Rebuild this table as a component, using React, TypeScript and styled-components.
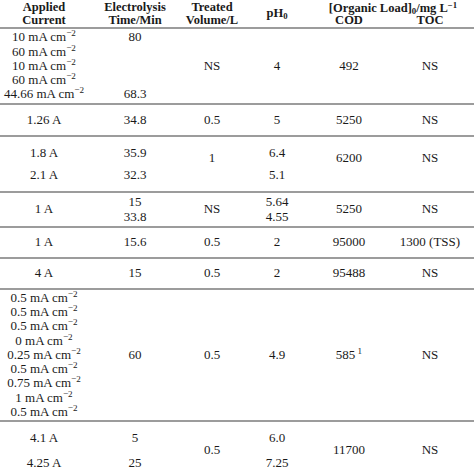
import type { ReactNode } from "react";
import styled, { createGlobalStyle } from "styled-components";

const GlobalStyle = createGlobalStyle`
  html, body {
    margin: 0;
    padding: 0;
    background: #ffffff;
  }
  body {
    font-family: "Liberation Serif", "Times New Roman", serif;
    color: #1a1a1a;
  }
`;

const Table = styled.table`
  width: 474px;
  border-collapse: collapse;
  table-layout: fixed;
  font-size: 13px;
`;

const HeadRow = styled.tr`
  height: 14px;
`;

const HeadCell = styled.th`
  padding: 0;
  font-size: 12.5px;
  font-weight: bold;
  line-height: 12.5px;
  text-align: center;
  vertical-align: middle;
  border-bottom: 2px solid #9c9c9c;
`;

const GroupCell = styled.th`
  padding: 0;
  font-size: 12.5px;
  font-weight: bold;
  line-height: 12.5px;
  text-align: center;
  vertical-align: bottom;
  white-space: nowrap;
`;

const SubHeadCell = styled(HeadCell)`
  vertical-align: top;
`;

const BodyRow = styled.tr<{ $height: number; $last?: boolean }>`
  height: ${(p) => p.$height}px;

  td {
    border-bottom: ${(p) => (p.$last ? "none" : "2px solid #9c9c9c")};
  }
`;

const Cell = styled.td<{ $lift?: number }>`
  padding: 0 0 ${(p) => p.$lift ?? 0}px;
  text-align: center;
  vertical-align: middle;
  line-height: 14.3px;
  white-space: nowrap;
`;

const Lines = styled.div<{ $gap?: number }>`
  display: flex;
  flex-direction: column;
  align-items: center;
  gap: ${(p) => p.$gap ?? 0}px;
`;

const Line = styled.span`
  display: block;
`;

const Sup = styled.sup`
  font-size: 0.7em;
  line-height: 0;
  vertical-align: 0.5em;
`;

const Sub = styled.sub`
  font-size: 0.7em;
  line-height: 0;
  vertical-align: -0.25em;
`;

type Row = {
  height: number;
  current: string[];
  currentGap?: number;
  time: string[];
  timeGap?: number;
  volume: string;
  ph: string[];
  phGap?: number;
  cod: string;
  codNote?: string;
  toc: string;
  lift?: number;
};

const rows: Row[] = [
  {
    height: 76,
    current: ["10", "60", "10", "60", "44.66"],
    time: ["80", "\u00a0", "\u00a0", "\u00a0", "68.3"],
    volume: "NS",
    ph: ["4"],
    cod: "492",
    toc: "NS",
  },
  {
    height: 32,
    current: ["1.26 A"],
    time: ["34.8"],
    volume: "0.5",
    ph: ["5"],
    cod: "5250",
    toc: "NS",
  },
  {
    height: 56,
    current: ["1.8 A", "2.1 A"],
    currentGap: 8,
    time: ["35.9", "32.3"],
    timeGap: 8,
    volume: "1",
    ph: ["6.4", "5.1"],
    phGap: 8,
    cod: "6200",
    toc: "NS",
    lift: 12,
  },
  {
    height: 35,
    current: ["1 A"],
    time: ["15", "33.8"],
    volume: "NS",
    ph: ["5.64", "4.55"],
    cod: "5250",
    toc: "NS",
  },
  {
    height: 31,
    current: ["1 A"],
    time: ["15.6"],
    volume: "0.5",
    ph: ["2"],
    cod: "95000",
    toc: "1300 (TSS)",
  },
  {
    height: 31,
    current: ["4 A"],
    time: ["15"],
    volume: "0.5",
    ph: ["2"],
    cod: "95488",
    toc: "NS",
  },
  {
    height: 132,
    current: ["0.5", "0.5", "0.5", "0", "0.25", "0.5", "0.75", "1", "0.5"],
    time: ["60"],
    volume: "0.5",
    ph: ["4.9"],
    cod: "585",
    codNote: "1",
    toc: "NS",
  },
  {
    height: 58,
    current: ["4.1 A", "4.25 A"],
    currentGap: 11,
    time: ["5", "25"],
    timeGap: 11,
    volume: "0.5",
    ph: ["6.0", "7.25"],
    phGap: 11,
    cod: "11700",
    toc: "NS",
  },
];

const renderCurrent = (value: string): ReactNode =>
  value.endsWith("A") ? (
    value
  ) : (
    <>
      {value} mA cm<Sup>−2</Sup>
    </>
  );

export default function App() {
  return (
    <>
      <GlobalStyle />
      <Table>
        <colgroup>
          <col style={{ width: 88 }} />
          <col style={{ width: 94 }} />
          <col style={{ width: 60 }} />
          <col style={{ width: 70 }} />
          <col style={{ width: 74 }} />
          <col style={{ width: 88 }} />
        </colgroup>
        <thead>
          <HeadRow>
            <HeadCell rowSpan={2}>
              Applied
              <br />
              Current
            </HeadCell>
            <HeadCell rowSpan={2}>
              Electrolysis
              <br />
              Time/Min
            </HeadCell>
            <HeadCell rowSpan={2}>
              Treated
              <br />
              Volume/L
            </HeadCell>
            <HeadCell rowSpan={2}>
              pH<Sub>0</Sub>
            </HeadCell>
            <GroupCell colSpan={2}>
              [Organic Load]<Sub>0</Sub>/mg L<Sup>−1</Sup>
            </GroupCell>
          </HeadRow>
          <HeadRow>
            <SubHeadCell>COD</SubHeadCell>
            <SubHeadCell>TOC</SubHeadCell>
          </HeadRow>
        </thead>
        <tbody>
          {rows.map((row, i) => (
            <BodyRow key={i} $height={row.height} $last={i === rows.length - 1}>
              <Cell>
                <Lines $gap={row.currentGap}>
                  {row.current.map((c, j) => (
                    <Line key={j}>{renderCurrent(c)}</Line>
                  ))}
                </Lines>
              </Cell>
              <Cell>
                <Lines $gap={row.timeGap}>
                  {row.time.map((t, j) => (
                    <Line key={j}>{t}</Line>
                  ))}
                </Lines>
              </Cell>
              <Cell $lift={row.lift}>{row.volume}</Cell>
              <Cell>
                <Lines $gap={row.phGap}>
                  {row.ph.map((p, j) => (
                    <Line key={j}>{p}</Line>
                  ))}
                </Lines>
              </Cell>
              <Cell $lift={row.lift}>
                {row.cod}
                {row.codNote && <Sup> {row.codNote}</Sup>}
              </Cell>
              <Cell $lift={row.lift}>{row.toc}</Cell>
            </BodyRow>
          ))}
        </tbody>
      </Table>
    </>
  );
}
